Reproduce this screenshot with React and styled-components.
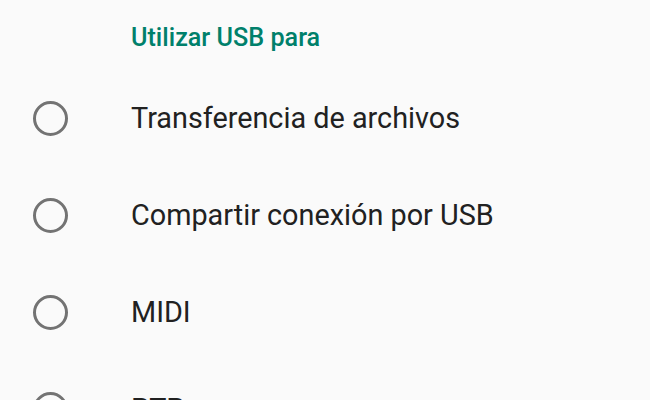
import React from 'react';
import styled, { createGlobalStyle } from 'styled-components';

const GlobalStyle = createGlobalStyle`
    html, body {
        margin: 0;
        padding: 0;
        background: #fafafa;
        overflow: hidden;
    }
    body {
        font-family: Roboto, "Noto Sans", sans-serif;
    }
`;

const Screen = styled.div`
    width: 650px;
    height: 400px;
    background: #fafafa;
    overflow: hidden;
`;

const Header = styled.div`
    height: 70px;
    padding-left: 131px;
    padding-top: 23px;
    box-sizing: border-box;
    font-size: 25.2px;
    font-weight: 500;
    color: #00806b;
    line-height: 30px;
`;

const Option = styled.label`
    display: flex;
    align-items: center;
    height: 97px;
    flex-shrink: 0;
`;

const RadioCell = styled.div`
    width: 131px;
    display: flex;
    justify-content: flex-start;
    padding-left: 33px;
    box-sizing: border-box;
`;

const Radio = styled.span`
    width: 35px;
    height: 35px;
    border: 3px solid #737373;
    border-radius: 50%;
    box-sizing: border-box;
`;

const Label = styled.span`
    font-size: 28.8px;
    color: #212121;
    line-height: 1;
`;

const options = [
    'Transferencia de archivos',
    'Compartir conexión por USB',
    'MIDI',
    'PTP',
];

const App = () => {
    return (
        <Screen>
            <GlobalStyle />
            <Header>Utilizar USB para</Header>
            {options.map((o) => (
                <Option key={o}>
                    <RadioCell>
                        <Radio />
                    </RadioCell>
                    <Label>{o}</Label>
                </Option>
            ))}
        </Screen>
    );
};

export default App;
